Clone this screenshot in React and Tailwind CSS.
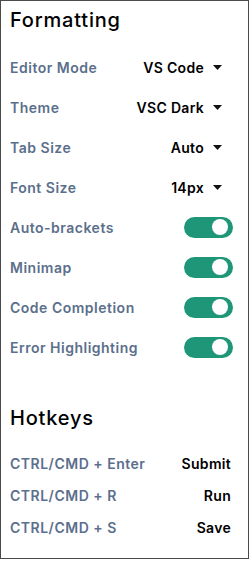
import React from 'react';

const selects = [
    { label: 'Editor Mode', value: 'VS Code' },
    { label: 'Theme', value: 'VSC Dark' },
    { label: 'Tab Size', value: 'Auto' },
    { label: 'Font Size', value: '14px' },
];

const toggles = ['Auto-brackets', 'Minimap', 'Code Completion', 'Error Highlighting'];

const hotkeys = [
    { keys: 'CTRL/CMD + Enter', action: 'Submit' },
    { keys: 'CTRL/CMD + R', action: 'Run' },
    { keys: 'CTRL/CMD + S', action: 'Save' },
];

const Caret = () => (
    <svg width="9" height="5" viewBox="0 0 9 5" className="ml-[9px]">
        <path d="M0 0 L9 0 L4.5 5 Z" fill="#111" />
    </svg>
);

const Toggle = () => (
    <div className="w-[49px] h-[21px] rounded-full bg-[#1f9677] flex items-center justify-end pr-[5px]">
        <div className="w-[16px] h-[16px] rounded-full bg-white" />
    </div>
);

const App = () => {
    return (
        <div className="w-[249px] h-[559px] bg-white border border-[#4a4a4a] pl-[9px] font-['Inter',sans-serif]">
            {/* Formatting */}
            <h2 className="pt-[5px] text-[20px] leading-[28px] font-medium tracking-[0.8px] text-black">Formatting</h2>
            <div className="mt-[13px]">
                {selects.map((s) => (
                    <div key={s.label} className="h-10 flex items-center justify-between pr-[26px]">
                        <span className="text-[14px] font-semibold tracking-[0.5px] text-[#5b6f8c]">{s.label}</span>
                        <span className="flex items-center text-[14px] font-semibold tracking-[0.3px] text-black">
                            {s.value}
                            <Caret />
                        </span>
                    </div>
                ))}
                {toggles.map((t) => (
                    <div key={t} className="h-10 flex items-center justify-between pr-[15px]">
                        <span className="text-[14px] font-semibold tracking-[0.5px] text-[#5b6f8c]">{t}</span>
                        <Toggle />
                    </div>
                ))}
            </div>

            {/* Hotkeys */}
            <h2 className="mt-[37px] text-[20px] leading-[28px] font-medium tracking-[0.8px] text-black">Hotkeys</h2>
            <div className="mt-[15px]">
                {hotkeys.map((h) => (
                    <div key={h.keys} className="h-8 flex items-center justify-between pr-[17px]">
                        <span className="text-[14px] font-semibold tracking-[0.5px] text-[#5b6f8c]">{h.keys}</span>
                        <span className="text-[14px] font-semibold tracking-[0.3px] text-black">{h.action}</span>
                    </div>
                ))}
            </div>
        </div>
    );
};

export default App;
